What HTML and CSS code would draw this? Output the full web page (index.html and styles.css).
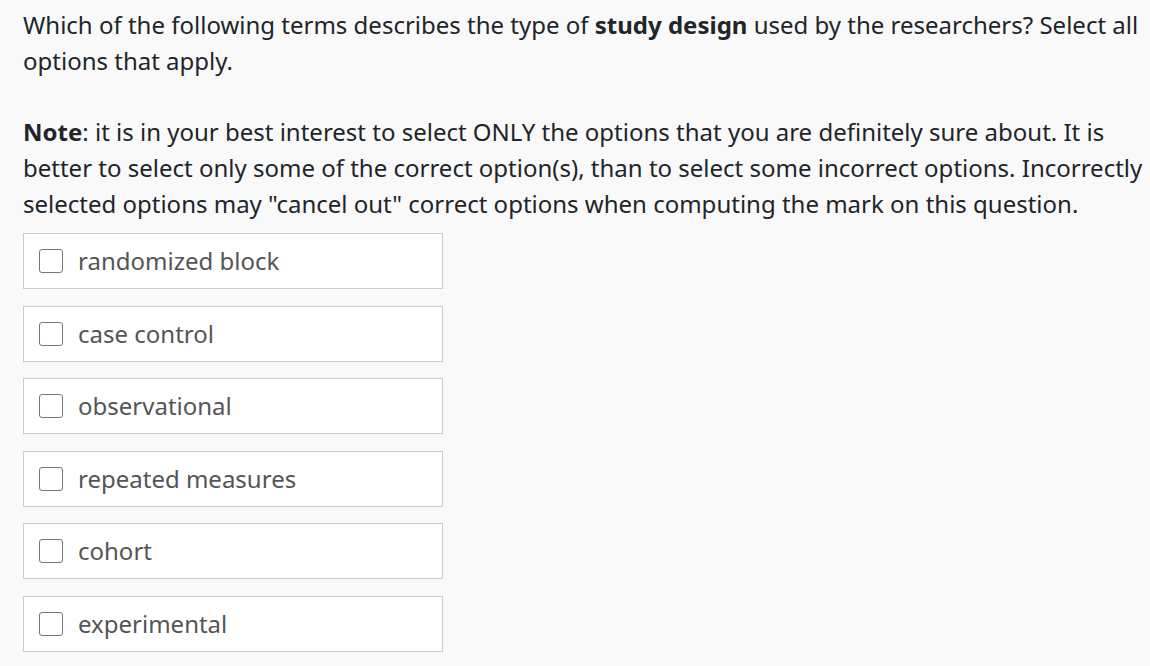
FILE: index.html
```html
<!DOCTYPE html>
<html>
<head>
<meta charset="utf-8">
<link rel="stylesheet" href="styles.css">
</head>
<body>
<div class="question">
  <p class="prompt">Which of the following terms describes the type of <strong>study design</strong> used by the researchers? Select all options that apply.</p>
  <p class="note"><strong>Note</strong>: it is in your best interest to select ONLY the options that you are definitely sure about. It is better to select only some of the correct option(s), than to select some incorrect options. Incorrectly selected options may "cancel out" correct options when computing the mark on this question.</p>
  <div class="options">
    <label class="option"><span class="box"></span><span class="label">randomized block</span></label>
    <label class="option"><span class="box"></span><span class="label">case control</span></label>
    <label class="option"><span class="box"></span><span class="label">observational</span></label>
    <label class="option"><span class="box"></span><span class="label">repeated measures</span></label>
    <label class="option"><span class="box"></span><span class="label">cohort</span></label>
    <label class="option"><span class="box"></span><span class="label">experimental</span></label>
  </div>
</div>
</body>
</html>
```
FILE: styles.css
```css
html, body {
  margin: 0;
  padding: 0;
  background: #f9f9f9;
}
body {
  font-family: "Noto Sans", "Open Sans", sans-serif;
  font-size: 24px;
  line-height: 36px;
  color: #212529;
}
.question {
  padding: 7px 0 0 23px;
}
.prompt {
  margin: 0 0 35px 0;
}
.note {
  margin: 0 0 11px 0;
}
strong {
  font-weight: 700;
}
.options {
  display: flex;
  flex-direction: column;
  gap: 16.6px;
}
.option {
  box-sizing: border-box;
  width: 420px;
  height: 56px;
  background: #fff;
  border: 1px solid #cccccc;
  display: flex;
  align-items: center;
  padding-left: 15px;
  gap: 15px;
}
.box {
  box-sizing: border-box;
  width: 24px;
  height: 24px;
  border: 1px solid #767676;
  border-radius: 3px;
  background: #fff;
  flex: none;
}
.label {
  color: #555555;
}
```
